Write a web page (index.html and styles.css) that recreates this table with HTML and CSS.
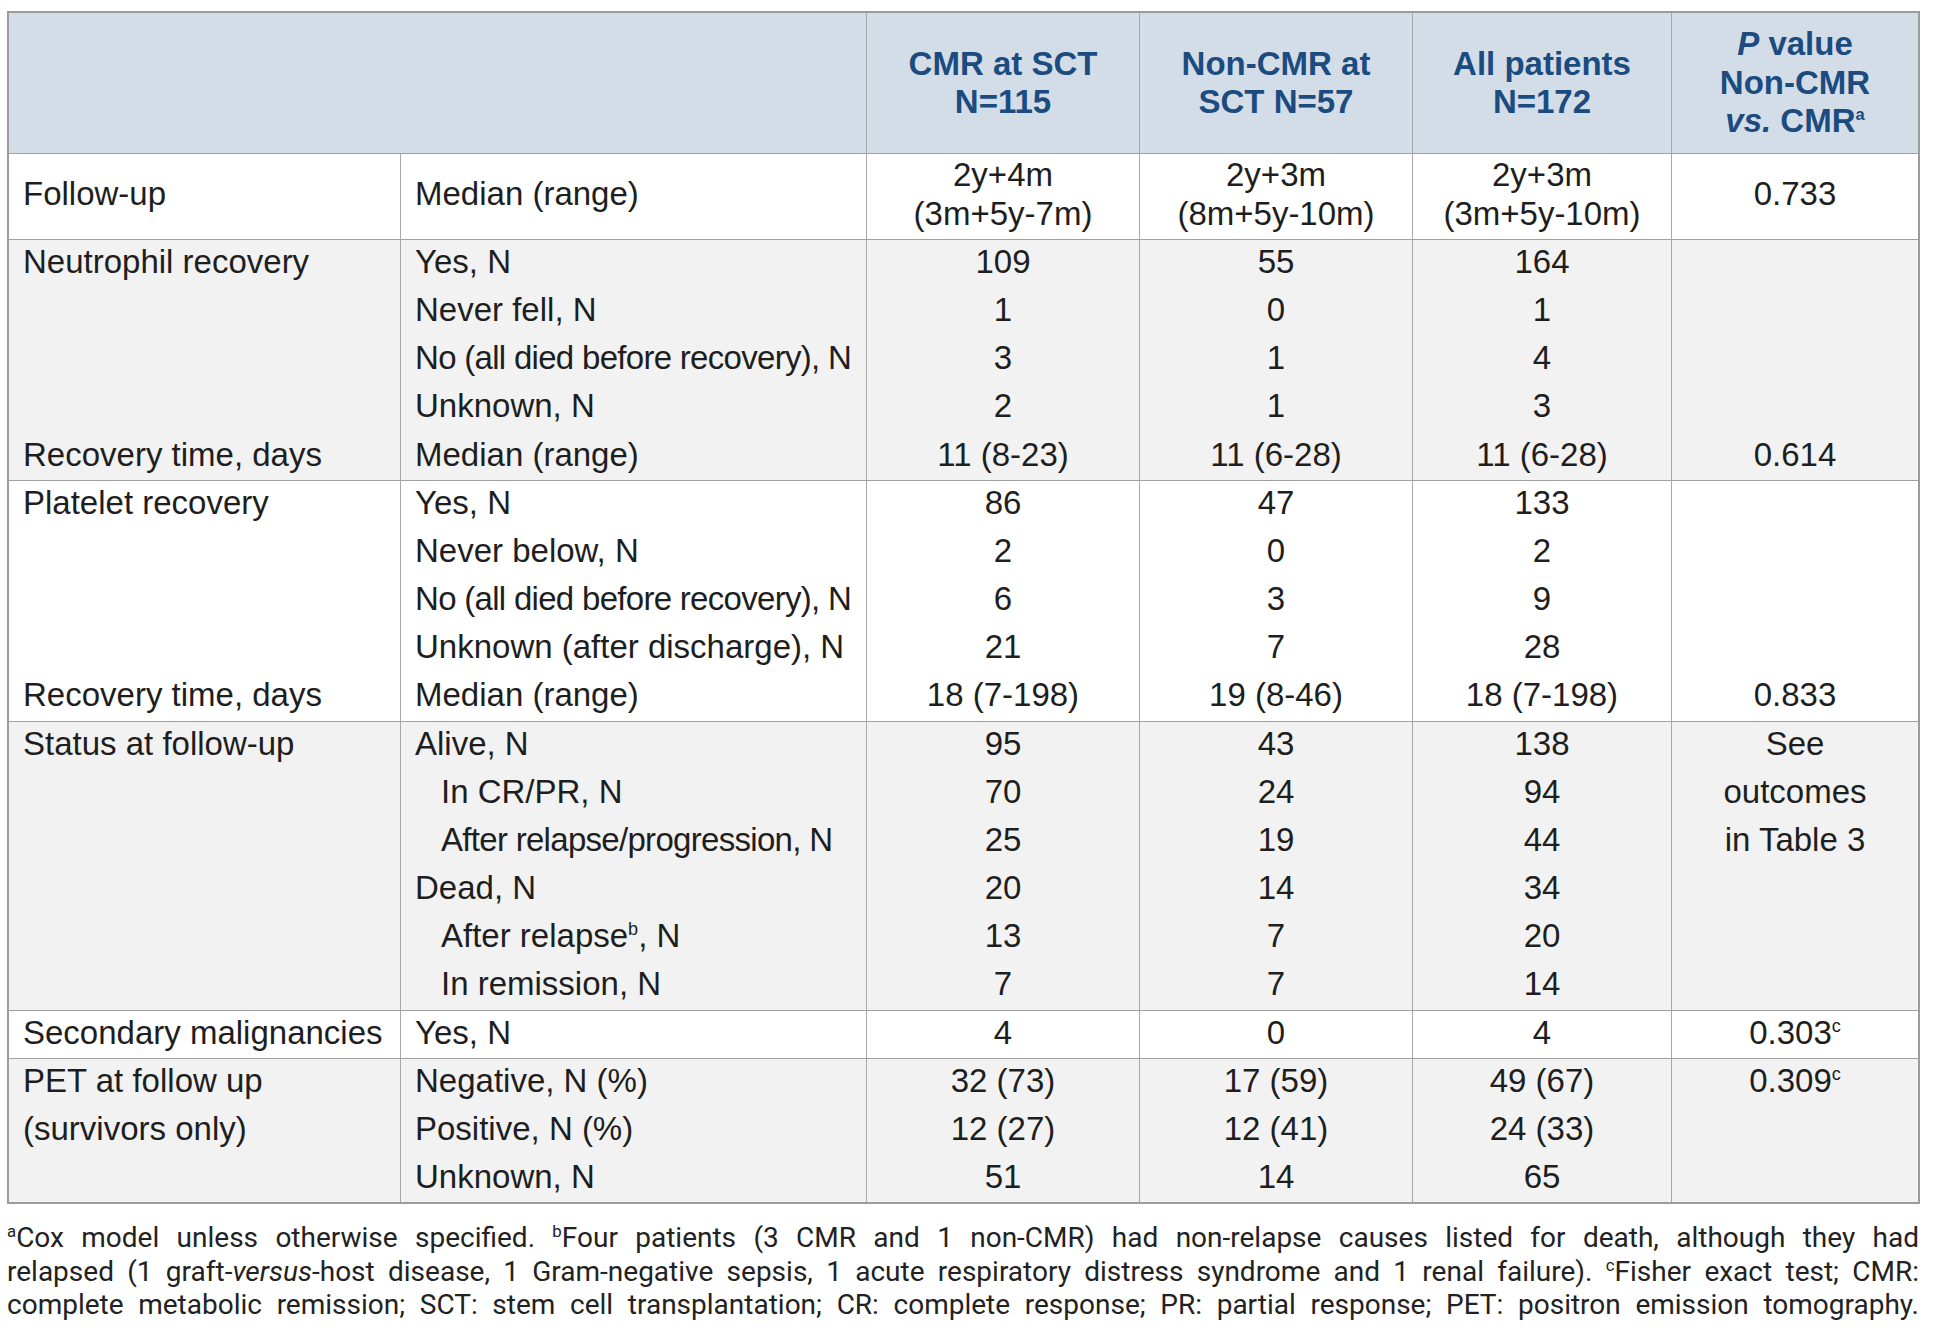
FILE: index.html
```html
<!DOCTYPE html>
<html lang="en">
<head>
<meta charset="utf-8">
<title>Table</title>
<link rel="stylesheet" href="styles.css">
</head>
<body>
<div class="page">
<table class="t">
  <colgroup>
    <col class="c1"><col class="c2"><col class="c3"><col class="c4"><col class="c5"><col class="c6">
  </colgroup>
  <thead>
    <tr>
      <th colspan="2" class="hfirst"><div class="hc"></div></th>
      <th><div class="hc"><span>CMR at SCT</span><span>N=115</span></div></th>
      <th><div class="hc"><span>Non-CMR at</span><span>SCT N=57</span></div></th>
      <th><div class="hc"><span>All patients</span><span>N=172</span></div></th>
      <th><div class="hc"><span><i>P</i> value</span><span>Non-CMR</span><span><i>vs.</i> CMR<sup>a</sup></span></div></th>
    </tr>
  </thead>
  <tbody class="w">
    <tr class="fu">
      <td class="lbl">Follow-up</td>
      <td class="lbl">Median (range)</td>
      <td class="num"><span class="ln">2y+4m</span><span class="ln">(3m+5y-7m)</span></td>
      <td class="num"><span class="ln">2y+3m</span><span class="ln">(8m+5y-10m)</span></td>
      <td class="num"><span class="ln">2y+3m</span><span class="ln">(3m+5y-10m)</span></td>
      <td class="num">0.733</td>
    </tr>
  </tbody>
  <tbody class="g">
    <tr class="first"><td class="lbl">Neutrophil recovery</td><td class="lbl">Yes, N</td><td class="num">109</td><td class="num">55</td><td class="num">164</td><td class="num"></td></tr>
    <tr><td class="lbl"></td><td class="lbl">Never fell, N</td><td class="num">1</td><td class="num">0</td><td class="num">1</td><td class="num"></td></tr>
    <tr><td class="lbl"></td><td class="lbl tight">No (all died before recovery), N</td><td class="num">3</td><td class="num">1</td><td class="num">4</td><td class="num"></td></tr>
    <tr><td class="lbl"></td><td class="lbl">Unknown, N</td><td class="num">2</td><td class="num">1</td><td class="num">3</td><td class="num"></td></tr>
    <tr><td class="lbl">Recovery time, days</td><td class="lbl">Median (range)</td><td class="num">11 (8-23)</td><td class="num">11 (6-28)</td><td class="num">11 (6-28)</td><td class="num">0.614</td></tr>
  </tbody>
  <tbody class="w">
    <tr class="first"><td class="lbl">Platelet recovery</td><td class="lbl">Yes, N</td><td class="num">86</td><td class="num">47</td><td class="num">133</td><td class="num"></td></tr>
    <tr><td class="lbl"></td><td class="lbl">Never below, N</td><td class="num">2</td><td class="num">0</td><td class="num">2</td><td class="num"></td></tr>
    <tr><td class="lbl"></td><td class="lbl tight">No (all died before recovery), N</td><td class="num">6</td><td class="num">3</td><td class="num">9</td><td class="num"></td></tr>
    <tr><td class="lbl"></td><td class="lbl">Unknown (after discharge), N</td><td class="num">21</td><td class="num">7</td><td class="num">28</td><td class="num"></td></tr>
    <tr><td class="lbl">Recovery time, days</td><td class="lbl">Median (range)</td><td class="num">18 (7-198)</td><td class="num">19 (8-46)</td><td class="num">18 (7-198)</td><td class="num">0.833</td></tr>
  </tbody>
  <tbody class="g">
    <tr class="first"><td class="lbl">Status at follow-up</td><td class="lbl">Alive, N</td><td class="num">95</td><td class="num">43</td><td class="num">138</td><td class="num">See</td></tr>
    <tr><td class="lbl"></td><td class="lbl ind">In CR/PR, N</td><td class="num">70</td><td class="num">24</td><td class="num">94</td><td class="num">outcomes</td></tr>
    <tr><td class="lbl"></td><td class="lbl ind tight">After relapse/progression, N</td><td class="num">25</td><td class="num">19</td><td class="num">44</td><td class="num">in Table 3</td></tr>
    <tr><td class="lbl"></td><td class="lbl">Dead, N</td><td class="num">20</td><td class="num">14</td><td class="num">34</td><td class="num"></td></tr>
    <tr><td class="lbl"></td><td class="lbl ind">After relapse<sup>b</sup>, N</td><td class="num">13</td><td class="num">7</td><td class="num">20</td><td class="num"></td></tr>
    <tr><td class="lbl"></td><td class="lbl ind">In remission, N</td><td class="num">7</td><td class="num">7</td><td class="num">14</td><td class="num"></td></tr>
  </tbody>
  <tbody class="w">
    <tr class="first"><td class="lbl">Secondary malignancies</td><td class="lbl">Yes, N</td><td class="num">4</td><td class="num">0</td><td class="num">4</td><td class="num">0.303<sup>c</sup></td></tr>
  </tbody>
  <tbody class="g">
    <tr class="first"><td class="lbl">PET at follow up</td><td class="lbl">Negative, N (%)</td><td class="num">32 (73)</td><td class="num">17 (59)</td><td class="num">49 (67)</td><td class="num">0.309<sup>c</sup></td></tr>
    <tr><td class="lbl">(survivors only)</td><td class="lbl">Positive, N (%)</td><td class="num">12 (27)</td><td class="num">12 (41)</td><td class="num">24 (33)</td><td class="num"></td></tr>
    <tr><td class="lbl"></td><td class="lbl">Unknown, N</td><td class="num">51</td><td class="num">14</td><td class="num">65</td><td class="num"></td></tr>
  </tbody>
</table>
<div class="fn">
  <span class="l"><sup>a</sup>Cox model unless otherwise specified. <sup>b</sup>Four patients (3 CMR and 1 non-CMR) had non-relapse causes listed for death, although they had</span>
  <span class="l">relapsed (1 graft-<i>versus</i>-host disease, 1 Gram-negative sepsis, 1 acute respiratory distress syndrome and 1 renal failure). <sup>c</sup>Fisher exact test; CMR:</span>
  <span class="l">complete metabolic remission; SCT: stem cell transplantation; CR: complete response; PR: partial response; PET: positron emission tomography.</span>
</div>
</div>
</body>
</html>
```

FILE: styles.css
```css
html, body {
  margin: 0;
  padding: 0;
  background: #ffffff;
}

.page {
  padding: 11px 0 0 7px;
  width: 1913px;
}

.t {
  width: 1913px;
  table-layout: fixed;
  border-collapse: separate;
  border-spacing: 0;
  border: 2px solid #9c9c9c;
  font-family: "Liberation Sans", Arial, sans-serif;
  font-size: 33px;
  color: #1e1e1e;
}

.c1 { width: 391px; }
.c2 { width: 466px; }
.c3 { width: 273px; }
.c4 { width: 273px; }
.c5 { width: 259px; }
.c6 { width: 247px; }

/* header */
.t th {
  background: #d3dde7;
  padding: 0;
  border-left: 1px solid #a8a8a8;
  border-bottom: 1px solid #a0a0a0;
  color: #1b4b7f;
  font-weight: 700;
  font-size: 33px;
}

.t th.hfirst {
  border-left: none;
}

.hc {
  height: 140px;
  display: flex;
  flex-direction: column;
  justify-content: center;
  align-items: center;
  line-height: 38.5px;
  box-sizing: border-box;
}

/* body cells */
.t td {
  padding: 0 10px 3px 14px;
  line-height: 45.15px;
  vertical-align: middle;
  border-left: 1px solid #a8a8a8;
  white-space: nowrap;
}

.t td:first-child {
  border-left: none;
}

.t td.num {
  text-align: center;
  padding-left: 4px;
  padding-right: 4px;
}

.t td.ind {
  padding-left: 40px;
}

.t td.tight {
  letter-spacing: -0.7px;
}

.t tr.first td {
  border-top: 1px solid #a0a0a0;
  line-height: 44.15px;
}

.t tr.fu td {
  height: 80px;
  padding-top: 0;
  padding-bottom: 5px;
  line-height: 39.5px;
}

.ln {
  display: block;
}

.w td { background: #ffffff; }
.g td { background: #f2f2f2; }

sup {
  font-size: 0.55em;
  vertical-align: super;
  line-height: 0;
}

.t th sup {
  font-size: 0.5em;
}

/* footnote */
.fn {
  margin-top: 17px;
  width: 1912px;
  font-family: "Roboto", "Liberation Sans", sans-serif;
  font-size: 28px;
  line-height: 33.5px;
  color: #222222;
}

.fn .l {
  display: block;
  text-align: justify;
  text-align-last: justify;
}

.fn sup {
  font-size: 0.6em;
}
```
